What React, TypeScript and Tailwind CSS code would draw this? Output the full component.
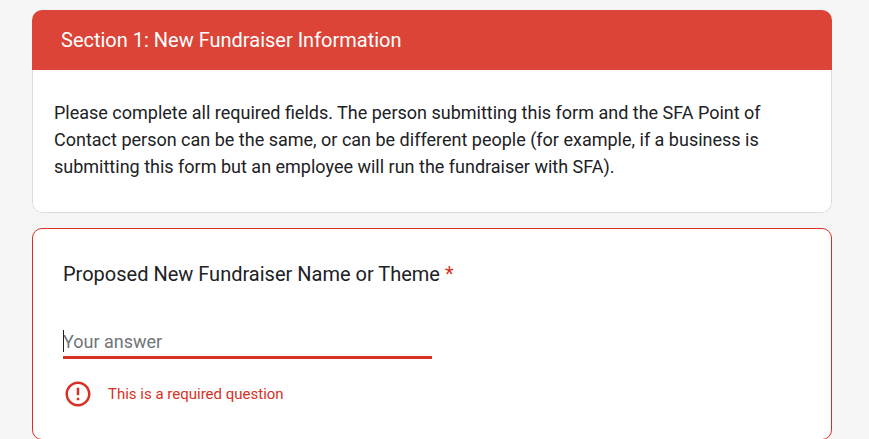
import { useState } from "react";

// Filled header with the section title
const SectionHeader = ({ title }: { title: string }) => (
  <h2 className="bg-[#db4437] px-[29px] py-4 text-xl leading-7 text-white">{title}</h2>
);

const ErrorIcon = () => (
  <svg viewBox="0 0 24 24" className="size-[30px] shrink-0" fill="#d93025" aria-hidden="true">
    <path d="M11 15h2v2h-2zM11 7h2v6h-2zM11.99 2C6.47 2 2 6.48 2 12s4.47 10 9.99 10C17.52 22 22 17.52 22 12S17.52 2 11.99 2zM12 20c-4.42 0-8-3.58-8-8s3.58-8 8-8 8 3.58 8 8-3.58 8-8 8z" />
  </svg>
);

export default function App() {
  const [answer, setAnswer] = useState("");

  return (
    <main
      className="min-h-screen bg-[#f5f5f5] pt-[10px] pr-[37px] pl-8 text-[#202124]"
      style={{ fontFamily: "Roboto, sans-serif" }}
    >
      <section className="overflow-hidden rounded-[10px] bg-white">
        <SectionHeader title="Section 1: New Fundraiser Information" />
        <p className="rounded-b-[10px] border border-t-0 border-[#dadce0] px-[21px] pt-[29px] pb-8 text-lg leading-[27px]">
          Please complete all required fields. The person submitting this form and the SFA Point of
          Contact person can be the same, or can be different people (for example, if a business is
          submitting this form but an employee will run the fundraiser with SFA).
        </p>
      </section>

      <section className="mt-[15px] rounded-[10px] border border-[#d93025] bg-white p-[30px]">
        <label htmlFor="fundraiser-name" className="block text-xl leading-[30px]">
          Proposed New Fundraiser Name or Theme <span className="text-[#d93025]">*</span>
        </label>
        <div className="relative mt-[38px] w-1/2 border-b-[3px] border-[#d93025]">
          <input
            id="fundraiser-name"
            type="text"
            required
            aria-invalid="true"
            aria-describedby="fundraiser-name-error"
            value={answer}
            onChange={(e) => setAnswer(e.target.value)}
            placeholder="Your answer"
            className="block h-[29px] w-full bg-transparent text-lg leading-[27px] outline-none placeholder:text-[#70757a]"
          />
          {/* Text caret */}
          <span className="absolute top-[3px] left-0 h-[22px] w-px bg-[#202124]" />
        </div>
        <p id="fundraiser-name-error" className="mt-5 flex items-center gap-[15px] text-[15px] leading-5 text-[#d93025]">
          <ErrorIcon />
          This is a required question
        </p>
      </section>
    </main>
  );
}
